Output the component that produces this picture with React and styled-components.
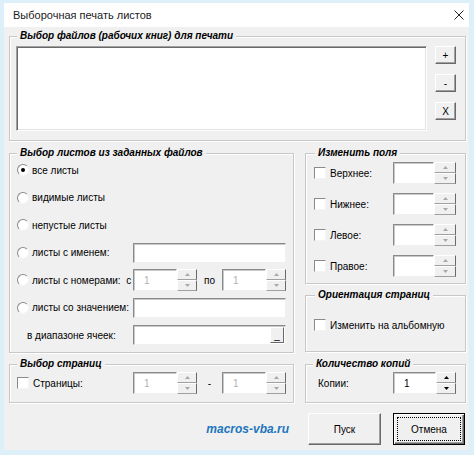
import React from 'react';
import styled, { createGlobalStyle } from 'styled-components';

const Global = createGlobalStyle`
  html, body { margin: 0; padding: 0; background: #ddf0fa; }
  body { width: 474px; height: 455px; overflow: hidden; font-family: "Liberation Sans", Arial, sans-serif; font-size: 10px; color: #000; }
`;

const Window = styled.div`
  width: 465px;
  height: 447px;
  margin: 3px 0 0 4px;
  background: #f0f0f0;
  display: flex;
  flex-direction: column;
`;

const TitleBar = styled.div`
  height: 24px;
  flex: none;
  background: #fff;
  display: flex;
  align-items: center;
  justify-content: space-between;
  padding: 0 5px 0 9px;
  font-family: "Liberation Sans", Arial, sans-serif;
  font-size: 11px;
  color: #1a1a1a;
`;

const Body = styled.div`
  flex: 1;
  display: flex;
  flex-direction: column;
  padding: 2px 3px 0 5px;
`;

const Frame = styled.fieldset`
  margin: 0;
  min-width: 0;
  border: 1px solid #c8c8c8;
  box-shadow: inset 1px 1px 0 #fff, 1px 1px 0 #fff;
  padding: ${(p) => p.$pt}px 0 ${(p) => p.$pb}px 0;
`;

const Legend = styled.legend`
  margin-left: ${(p) => p.$ml ?? 7}px;
  padding: 0 3px;
  background: #f0f0f0;
  font: italic bold 10px/14px "Liberation Sans", Arial, sans-serif;
  color: #000;
`;

const FilesRow = styled.div`
  display: flex;
  gap: 8px;
  padding: 0 9px 0 6px;
`;

const ListBox = styled.div`
  flex: 1;
  height: 85px;
  box-sizing: border-box;
  background: #fff;
  border: 1px solid;
  border-color: #a0a0a0 #fff #fff #a0a0a0;
  box-shadow: inset 1px 1px 0 #696969, inset -1px -1px 0 #e3e3e3;
`;

const SideButtons = styled.div`
  display: flex;
  flex-direction: column;
  gap: 10px;
  width: 21px;
`;

const SmallButton = styled.div`
  height: 18px;
  box-sizing: border-box;
  border: 1px solid;
  border-color: #fff #696969 #696969 #fff;
  box-shadow: inset -1px -1px 0 #a0a0a0;
  background: #f0f0f0;
  display: flex;
  align-items: center;
  justify-content: center;
  font-size: 10px;
`;

const Columns = styled.div`
  display: grid;
  grid-template-columns: 285px 161px;
  grid-template-rows: auto auto;
  column-gap: 11px;
  row-gap: 4px;
  margin-top: 5px;
`;

const Stack = styled.div`
  display: flex;
  flex-direction: column;
  gap: 4px;
`;

const FormGrid = styled.div`
  display: grid;
  grid-template-columns: ${(p) => p.$cols};
  grid-auto-rows: ${(p) => p.$row}px;
  row-gap: ${(p) => p.$gap}px;
  align-items: center;
  padding: 0 ${(p) => p.$pr}px 0 ${(p) => p.$pl}px;
`;

const Choice = styled.label`
  display: flex;
  align-items: center;
  gap: ${(p) => (p.$gap ?? 3)}px;
  white-space: nowrap;
  margin-left: ${(p) => p.$indent || 0}px;
`;

const RadioCircle = styled.span`
  width: 12px;
  height: 12px;
  box-sizing: border-box;
  border-radius: 50%;
  border: 1px solid;
  border-color: #8a8a8a #f4f4f4 #f4f4f4 #8a8a8a;
  background: #fff;
  display: flex;
  align-items: center;
  justify-content: center;
  flex: none;
  &::after {
    content: '';
    width: 4px;
    height: 4px;
    border-radius: 50%;
    background: ${(p) => (p.$on ? '#000' : 'transparent')};
  }
`;

const CheckSquare = styled.span`
  width: 12px;
  height: 12px;
  box-sizing: border-box;
  border: 1px solid;
  border-color: #8a8a8a #f4f4f4 #f4f4f4 #8a8a8a;
  background: #fff;
  flex: none;
`;

const TextBox = styled.div`
  height: 20px;
  box-sizing: border-box;
  background: #fff;
  border: 1px solid;
  border-color: #8a8a8a #f0f0f0 #f0f0f0 #8a8a8a;
  box-shadow: inset 1px 1px 0 #c8c8c8;
  display: flex;
  justify-content: flex-end;
  align-items: center;
  padding-right: 1px;
`;

const PickButton = styled.div`
  width: 14px;
  height: 16px;
  box-sizing: border-box;
  border: 1px solid;
  border-color: #fff #696969 #696969 #fff;
  background: #f0f0f0;
  display: flex;
  align-items: flex-end;
  justify-content: center;
  font-size: 10px;
  line-height: 12px;
`;

const SpinGroup = styled.div`
  display: flex;
  align-items: center;
  justify-content: space-between;
`;

const Sep = styled.span`
  flex: 1;
  text-align: center;
`;

const Spin = styled.div`
  display: flex;
  width: ${(p) => p.$w}px;
  height: 22px;
  flex: none;
`;

const SpinValue = styled.div`
  flex: 1;
  box-sizing: border-box;
  background: #fff;
  border: 1px solid;
  border-color: #8a8a8a transparent #f0f0f0 #8a8a8a;
  box-shadow: inset 1px 1px 0 #c8c8c8;
  padding-left: ${(p) => p.$pl}px;
  display: flex;
  align-items: center;
  color: ${(p) => (p.$disabled ? '#b0b0b0' : '#000')};
  font-size: 10px;
`;

const SpinButtons = styled.div`
  width: ${(p) => p.$w}px;
  display: flex;
  flex-direction: column;
`;

const SpinButton = styled.div`
  flex: 1;
  box-sizing: border-box;
  border: 1px solid;
  border-color: #fff #696969 #a0a0a0 #fff;
  background: #f0f0f0;
  display: flex;
  align-items: center;
  justify-content: center;
`;

const Footer = styled.div`
  display: flex;
  align-items: center;
  justify-content: flex-end;
  padding: 10px 1px 0 0;
`;

const Site = styled.span`
  font: italic bold 12px "Liberation Sans", Arial, sans-serif;
  color: #2176bd;
  margin-right: 19px;
`;

const PushButton = styled.div`
  width: ${(p) => p.$w}px;
  height: 32px;
  box-sizing: border-box;
  margin-left: ${(p) => p.$ml || 0}px;
  background: #f0f0f0;
  border: 1px solid;
  border-color: ${(p) => (p.$default ? '#000' : '#fff #696969 #696969 #fff')};
  box-shadow: ${(p) =>
    p.$default
      ? 'inset 1px 1px 0 #fff, inset -1px -1px 0 #696969, inset -2px -2px 0 #a0a0a0'
      : 'inset -1px -1px 0 #a0a0a0'};
  padding: ${(p) => (p.$default ? '3px' : '0')};
  display: flex;
  font-size: 10px;
`;

const Caption = styled.span`
  flex: 1;
  display: flex;
  align-items: center;
  justify-content: center;
  border: 1px dotted ${(p) => (p.$focus ? '#000' : 'transparent')};
`;

const Arrow = ({ up, color }) => (
  <svg width="5" height="3" viewBox="0 0 5 3">
    <path d={up ? 'M2.5 0 L5 3 L0 3 Z' : 'M0 0 L5 0 L2.5 3 Z'} fill={color} />
  </svg>
);

const Spinner = ({ w = 64, value = '1', disabled = true, btn = 20, pl = 10 }) => (
  <Spin $w={w}>
    <SpinValue $disabled={disabled} $pl={pl}>{value}</SpinValue>
    <SpinButtons $w={btn}>
      <SpinButton><Arrow up color={disabled ? '#a8a8a8' : '#000'} /></SpinButton>
      <SpinButton><Arrow color={disabled ? '#a8a8a8' : '#000'} /></SpinButton>
    </SpinButtons>
  </Spin>
);

const Radio = ({ on, children }) => (
  <Choice>
    <RadioCircle $on={on} />
    <span>{children}</span>
  </Choice>
);

const Check = ({ children }) => (
  <Choice $gap={4}>
    <CheckSquare />
    <span>{children}</span>
  </Choice>
);

const Empty = styled.span``;

export default function App() {
  return (
    <>
      <Global />
      <Window>
        <TitleBar>
          <span>Выборочная печать листов</span>
          <svg width="10" height="10" viewBox="0 0 10 10">
            <path d="M0.5 0.5 L9.5 9.5 M9.5 0.5 L0.5 9.5" stroke="#222" strokeWidth="1" />
          </svg>
        </TitleBar>
        <Body>
          <Frame $pt={3} $pb={9}>
            <Legend>Выбор файлов (рабочих книг) для печати</Legend>
            <FilesRow>
              <ListBox />
              <SideButtons>
                <SmallButton>+</SmallButton>
                <SmallButton>-</SmallButton>
                <SmallButton>X</SmallButton>
              </SideButtons>
            </FilesRow>
          </Frame>

          <Columns>
            <Frame $pt={0} $pb={7}>
              <Legend>Выбор листов из заданных файлов</Legend>
              <FormGrid $cols="116px 153px" $row={20} $gap={7.5} $pl={7} $pr={7}>
                <Radio on>все листы</Radio>
                <Empty />
                <Radio>видимые листы</Radio>
                <Empty />
                <Radio>непустые листы</Radio>
                <Empty />
                <Radio>листы с именем:</Radio>
                <TextBox />
                <Radio>листы с номерами:&nbsp;&nbsp;с</Radio>
                <SpinGroup>
                  <Spinner />
                  <Sep>по</Sep>
                  <Spinner />
                </SpinGroup>
                <Radio>листы со значением:</Radio>
                <TextBox />
                <Choice $indent={10}>в диапазоне ячеек:</Choice>
                <TextBox>
                  <PickButton>_</PickButton>
                </TextBox>
              </FormGrid>
            </Frame>

            <Stack>
              <Frame $pt={2} $pb={6}>
                <Legend $ml={9}>Изменить поля</Legend>
                <FormGrid $cols="1fr 63px" $row={22} $gap={9} $pl={8} $pr={9}>
                  <Check>Верхнее:</Check>
                  <Spinner w={63} value="" btn={22} />
                  <Check>Нижнее:</Check>
                  <Spinner w={63} value="" btn={22} />
                  <Check>Левое:</Check>
                  <Spinner w={63} value="" btn={22} />
                  <Check>Правое:</Check>
                  <Spinner w={63} value="" btn={22} />
                </FormGrid>
              </Frame>
              <Frame $pt={13} $pb={16}>
                <Legend $ml={9}>Ориентация страниц</Legend>
                <FormGrid $cols="1fr" $row={20} $gap={0} $pl={8} $pr={9}>
                  <Check>Изменить на альбомную</Check>
                </FormGrid>
              </Frame>
            </Stack>

            <Frame $pt={1} $pb={8}>
              <Legend>Выбор страниц</Legend>
              <FormGrid $cols="116px 153px" $row={22} $gap={0} $pl={7} $pr={7}>
                <Check>Страницы:</Check>
                <SpinGroup>
                  <Spinner />
                  <Sep>-</Sep>
                  <Spinner />
                </SpinGroup>
              </FormGrid>
            </Frame>

            <Frame $pt={1} $pb={8}>
              <Legend>Количество копий</Legend>
              <FormGrid $cols="1fr 63px" $row={22} $gap={0} $pl={12} $pr={9}>
                <Choice>Копии:</Choice>
                <Spinner w={63} value="1" disabled={false} btn={20} pl={10} />
              </FormGrid>
            </Frame>
          </Columns>

          <Footer>
            <Site>macros-vba.ru</Site>
            <PushButton $w={73}>
              <Caption>Пуск</Caption>
            </PushButton>
            <PushButton $w={72} $ml={12} $default>
              <Caption $focus>Отмена</Caption>
            </PushButton>
          </Footer>
        </Body>
      </Window>
    </>
  );
}
